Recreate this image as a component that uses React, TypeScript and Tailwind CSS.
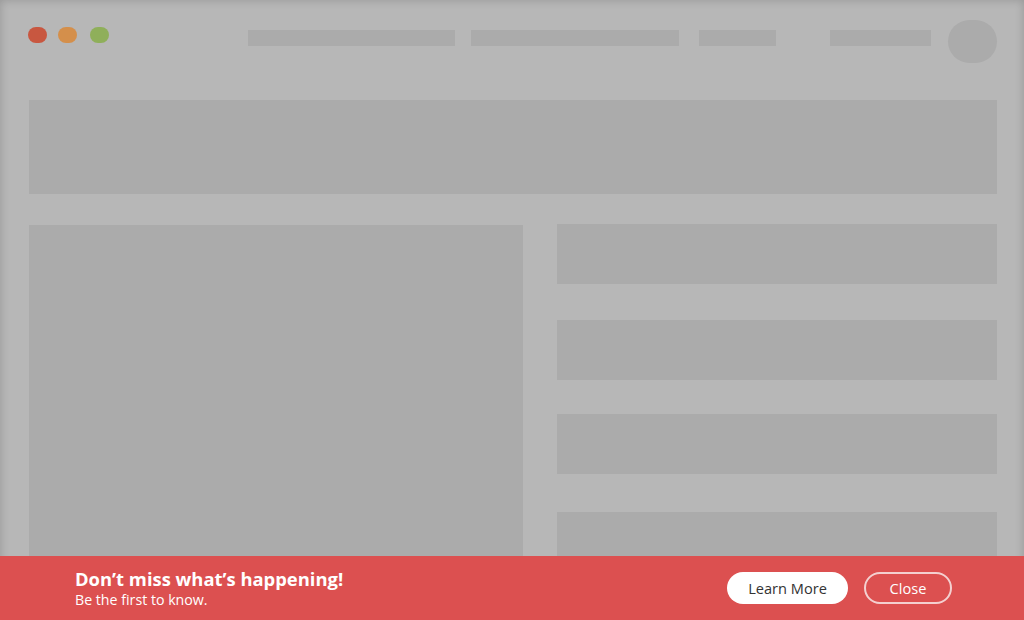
import React from "react";

export default function App() {
  return (
    <div
      className="relative w-[1024px] h-[620px] overflow-hidden bg-[#b7b7b7] shadow-[inset_0_0_10px_rgba(0,0,0,0.18)]"
      style={{ fontFamily: '"Open Sans", "Liberation Sans", sans-serif' }}
    >
      <div className="pl-[29px] pr-[27px] pt-[20px]">
        {/* header */}
        <div className="flex items-start h-[80px]">
          <div className="flex mt-[7px] ml-[-1px]">
            <div className="w-[19px] h-[16px] rounded-full bg-[#c85740]" />
            <div className="w-[19px] h-[16px] rounded-full bg-[#d48f4b] ml-[11px]" />
            <div className="w-[19px] h-[16px] rounded-full bg-[#8faf5a] ml-[13px]" />
          </div>
          <div className="flex mt-[10px] ml-[139px]">
            <div className="w-[207px] h-[16px] bg-[#ababab]" />
            <div className="w-[208px] h-[16px] bg-[#ababab] ml-[16px]" />
            <div className="w-[77px] h-[16px] bg-[#ababab] ml-[20px]" />
            <div className="w-[101px] h-[16px] bg-[#ababab] ml-[54px]" />
          </div>
          <div className="w-[49px] h-[43px] rounded-full bg-[#ababab] ml-[17px]" />
        </div>
        {/* hero */}
        <div className="h-[94px] bg-[#ababab]" />
        {/* columns */}
        <div className="flex gap-[34px] mt-[30px]">
          <div className="w-[494px] h-[400px] bg-[#ababab] mt-[1px]" />
          <div className="flex-1 flex flex-col">
            <div className="h-[60px] bg-[#ababab]" />
            <div className="h-[60px] bg-[#ababab] mt-[36px]" />
            <div className="h-[60px] bg-[#ababab] mt-[34px]" />
            <div className="h-[60px] bg-[#ababab] mt-[38px]" />
          </div>
        </div>
      </div>

      {/* banner */}
      <div className="absolute left-0 right-0 bottom-0 h-[64px] bg-[#dc5050] flex items-center justify-between pl-[75px] pr-[72px]">
        <div className="flex flex-col mt-[2px]">
          <div className="text-[18.4px] leading-[22px] font-bold text-white">
            Don’t miss what’s happening!
          </div>
          <div className="text-[14.2px] leading-[20px] text-white">
            Be the first to know.
          </div>
        </div>
        <div className="flex items-center gap-[16px]">
          <button className="w-[121px] h-[32px] rounded-full bg-white text-[#333333] text-[14.6px] leading-none flex items-center justify-center">
            Learn More
          </button>
          <button className="w-[88px] h-[32px] rounded-full border-2 border-[#f4d0d0] text-white text-[14.6px] leading-none flex items-center justify-center">
            Close
          </button>
        </div>
      </div>
    </div>
  );
}
